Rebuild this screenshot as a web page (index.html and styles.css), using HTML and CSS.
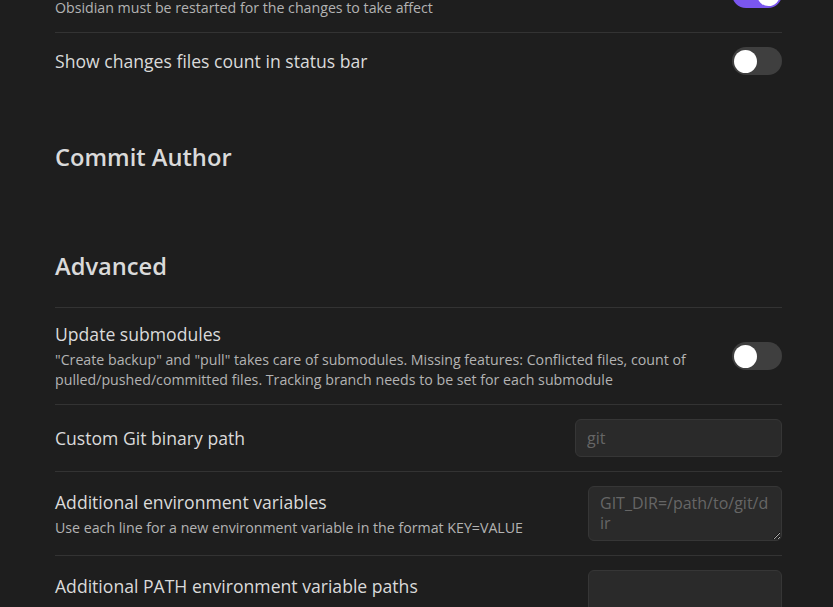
FILE: index.html
```html
<!DOCTYPE html>
<html lang="en">
<head>
<meta charset="utf-8">
<title>Obsidian Git settings</title>
<link rel="stylesheet" href="styles.css">
</head>
<body>
<div class="settings">
  <div class="item">
    <div class="info">
      <div class="name">Show branch status bar</div>
      <div class="desc">Obsidian must be restarted for the changes to take affect</div>
    </div>
    <div class="control"><div class="toggle on"><span class="knob"></span></div></div>
  </div>
  <div class="item">
    <div class="info">
      <div class="name">Show changes files count in status bar</div>
    </div>
    <div class="control"><div class="toggle"><span class="knob"></span></div></div>
  </div>

  <div class="heading"><h3>Commit Author</h3></div>
  <div class="heading"><h3>Advanced</h3></div>

  <div class="item">
    <div class="info">
      <div class="name">Update submodules</div>
      <div class="desc">"Create backup" and "pull" takes care of submodules. Missing features: Conflicted files, count of pulled/pushed/committed files. Tracking branch needs to be set for each submodule</div>
    </div>
    <div class="control"><div class="toggle"><span class="knob"></span></div></div>
  </div>
  <div class="item">
    <div class="info">
      <div class="name">Custom Git binary path</div>
    </div>
    <div class="control"><input class="field" type="text" placeholder="git"></div>
  </div>
  <div class="item">
    <div class="info">
      <div class="name">Additional environment variables</div>
      <div class="desc">Use each line for a new environment variable in the format KEY=VALUE</div>
    </div>
    <div class="control"><textarea class="area" placeholder="GIT_DIR=/path/to/git/d&#10;ir"></textarea></div>
  </div>
  <div class="item">
    <div class="info info-top">
      <div class="name">Additional PATH environment variable paths</div>
    </div>
    <div class="control"><textarea class="area"></textarea></div>
  </div>
</div>
</body>
</html>
```
FILE: styles.css
```css
html, body {
  margin: 0;
  padding: 0;
  background: #1e1e1e;
  color-scheme: dark;
  overflow: hidden;
}
body {
  font-family: "Open Sans", "Noto Sans", sans-serif;
  color: #dadada;
}
.settings {
  width: 727px;
  margin: -44px 0 0 55px;
}
.item {
  display: flex;
  align-items: center;
  padding: 14px 0;
  border-top: 1px solid #333333;
}
.item:first-child {
  border-top: none;
}
.heading + .item {
  border-top: 1px solid #333333;
}
.info {
  flex: 1 1 auto;
  margin-right: 40px;
}
.info-top {
  align-self: flex-start;
  margin-top: 4px;
}
.name {
  font-size: 17.6px;
  line-height: 24px;
  color: #dadada;
}
.desc {
  margin-top: 4px;
  font-size: 14.2px;
  line-height: 20px;
  color: #b3b3b3;
}
.control {
  flex: 0 0 auto;
  display: flex;
  justify-content: flex-end;
}
.heading {
  padding: 52px 0 25px;
}
.heading h3 {
  margin: 0;
  font-size: 23.7px;
  line-height: 32px;
  font-weight: 600;
  color: #dadada;
}
.toggle {
  width: 50px;
  height: 28px;
  border-radius: 14px;
  background: #3f3f3f;
  display: flex;
  align-items: center;
  padding: 0 2px;
  box-sizing: border-box;
}
.toggle.on {
  background: #7a56ee;
  justify-content: flex-end;
}
.knob {
  width: 23px;
  height: 23px;
  border-radius: 50%;
  background: #ffffff;
}
.field {
  width: 207px;
  height: 38px;
  box-sizing: border-box;
  padding: 0 11px;
  background: #2a2a2a;
  border: 1px solid #363636;
  border-radius: 6px;
  font-family: "Open Sans", "Noto Sans", sans-serif;
  font-size: 16px;
  color: #dadada;
  outline: none;
}
.field::placeholder,
.area::placeholder {
  color: #666666;
}
.area {
  display: block;
  width: 194px;
  height: 55px;
  box-sizing: border-box;
  padding: 6px 11px;
  background: #2a2a2a;
  border: 1px solid #363636;
  border-radius: 6px;
  font-family: "Open Sans", "Noto Sans", sans-serif;
  font-size: 16px;
  line-height: 20px;
  color: #dadada;
  outline: none;
  resize: both;
  overflow: hidden;
}
```
